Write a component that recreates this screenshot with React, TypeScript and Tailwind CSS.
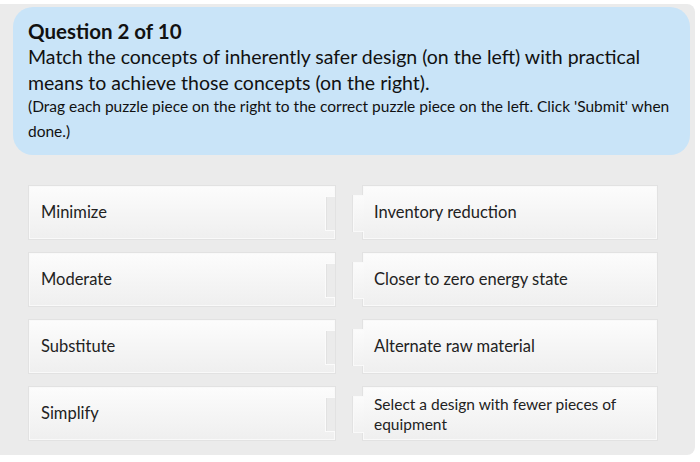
const rows = [
  { left: "Minimize", right: "Inventory reduction", small: false },
  { left: "Moderate", right: "Closer to zero energy state", small: false },
  { left: "Substitute", right: "Alternate raw material", small: false },
  { left: "Simplify", right: "Select a design with fewer pieces of equipment", small: true },
];

const font = { fontFamily: "Lato, 'Open Sans', sans-serif" };

const LeftPiece = ({ label }: { label: string }) => (
  <div className="relative w-[306px] h-[53px] flex items-center pl-[11px] bg-gradient-to-b from-[#fcfcfc] to-[#efefef] border border-[#f9f9f9] shadow-[0_0_0_1px_#e2e2e2] text-[16.5px] text-[#222]">
    {label}
    <div className="absolute -right-px top-[9px] w-[10px] h-[35px] bg-[#ebebeb] border-l border-y border-[#fbfbfb] shadow-[inset_1px_0_0_#e2e2e2]" />
  </div>
);

const RightPiece = ({ label, small }: { label: string; small: boolean }) => (
  <div
    className={
      small
        ? "relative ml-[10px] w-[294px] h-[53px] flex items-center pl-[10px] pr-[14px] bg-gradient-to-b from-[#fcfcfc] to-[#efefef] border border-[#f9f9f9] shadow-[0_0_0_1px_#e2e2e2] text-[15.5px] leading-[20px] text-[#222]"
        : "relative ml-[10px] w-[294px] h-[53px] flex items-center pl-[10px] pr-[14px] bg-gradient-to-b from-[#fcfcfc] to-[#efefef] border border-[#f9f9f9] shadow-[0_0_0_1px_#e2e2e2] text-[16.5px] leading-[21px] text-[#222]"
    }
  >
    <div className="absolute -left-[11px] top-[8px] w-[11px] h-[37px] bg-gradient-to-b from-[#fbfbfb] to-[#f1f1f1] border-l border-y border-[#f9f9f9] shadow-[-1px_0_0_#e2e2e2]" />
    <span className="relative">{label}</span>
  </div>
);

export default function App() {
  return (
    <div className="w-[700px] h-[462px] bg-white pt-[4px]" style={font}>
      <div className="w-[695px] h-[451px] bg-[#ebebeb] rounded-r-[8px] pt-[3px]">
        <div className="ml-[13px] w-[677px] h-[148px] rounded-[20px] bg-[#c9e4f8] px-[15px] pt-[11px] text-[#111]">
          <div className="text-[20.5px] font-bold leading-[26px]">Question 2 of 10</div>
          <div className="text-[19.5px] leading-[26px]">
            Match the concepts of inherently safer design (on the left) with practical means to achieve those concepts (on the right).
          </div>
          <div className="text-[15.5px] leading-[25px] -mt-[2px]">
            (Drag each puzzle piece on the right to the correct puzzle piece on the left. Click 'Submit' when done.)
          </div>
        </div>
        <div className="mt-[31px] flex flex-col gap-[14px] pl-[29px]">
          {rows.map((r) => (
            <div key={r.left} className="flex items-center gap-[18px]">
              <LeftPiece label={r.left} />
              <RightPiece label={r.right} small={r.small} />
            </div>
          ))}
        </div>
      </div>
    </div>
  );
}
